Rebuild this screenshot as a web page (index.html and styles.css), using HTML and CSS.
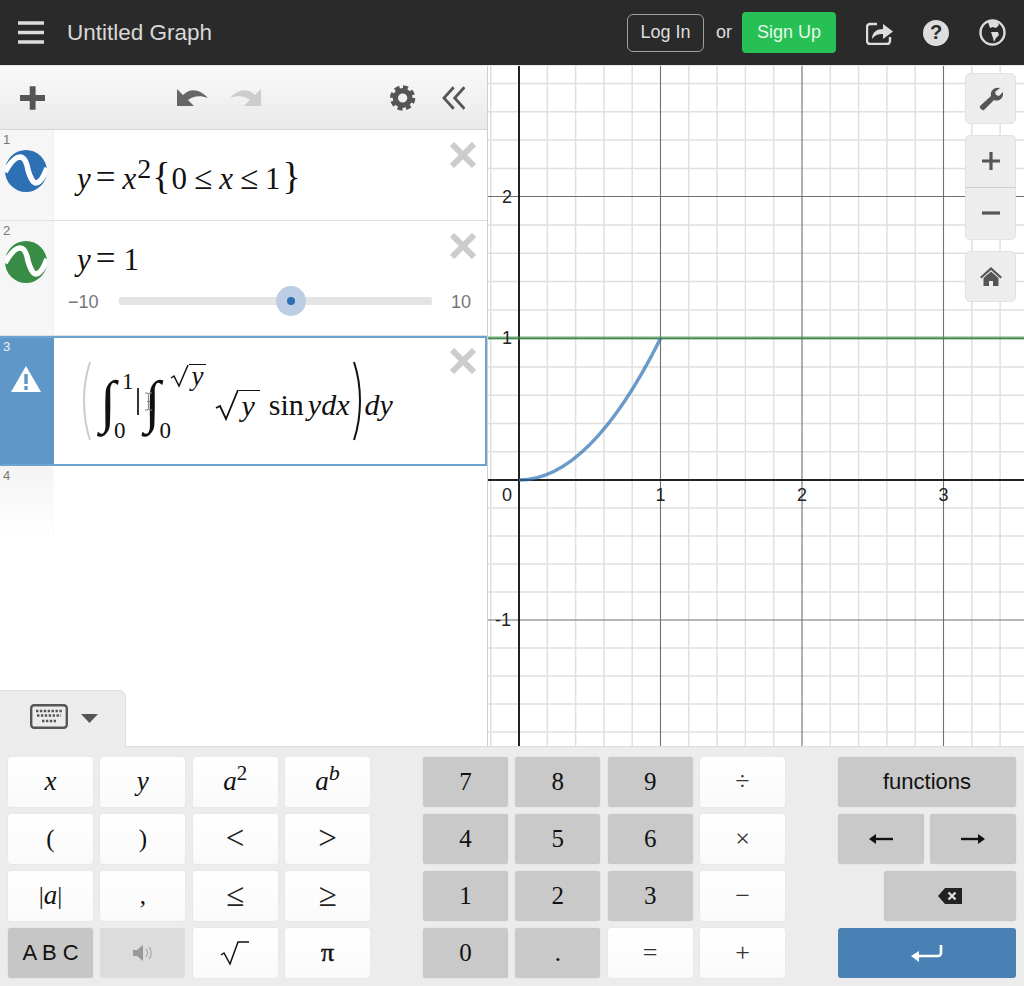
FILE: index.html
```html
<!DOCTYPE html>
<html lang="en">
<head>
<meta charset="utf-8">
<title>Untitled Graph</title>
<link rel="stylesheet" href="styles.css">
</head>
<body>
<div class="app">
  <header class="topbar">
    <svg class="burger" width="26" height="23" viewBox="0 0 26 23"><path d="M0 2h26M0 11.500h26M0 21h26" stroke="#ddd" stroke-width="3.600"/></svg>
    <span class="title">Untitled Graph</span>
    <div class="account">
      <span class="login">Log In</span>
      <span class="or">or</span>
      <span class="signup">Sign Up</span>
    </div>
    <div class="top-icons">
      <svg width="27" height="24" viewBox="0 0 27 24"><path d="M11 3H4a3 3 0 0 0-3 3v14a3 3 0 0 0 3 3h17a3 3 0 0 0 3-3v-4" fill="none" stroke="#ddd" stroke-width="2.400"/><path d="M6 18c0-7 5-10 11-10V3l10 7.500L17 18v-5c-5 0-8 1-11 5z" fill="#ddd"/></svg>
      <span class="help">?</span>
      <svg width="27" height="27" viewBox="0 0 27 27"><circle cx="13.500" cy="13.500" r="12" fill="none" stroke="#ddd" stroke-width="2.400"/><path d="M9 3l8-2 3 5-3 3-3-1-3 1zM12 13h7l1 3-3 3-2 4-1-4z" fill="#ddd"/></svg>
    </div>
  </header>

  <main class="workspace">
    <section class="panel">
      <div class="toolbar">
        <svg class="tb-plus" width="26" height="24" viewBox="0 0 26 24"><path d="M13 0v24M0 12h26" stroke="#555" stroke-width="6"/></svg>
        <div class="history">
          <svg width="31" height="18" viewBox="0 0 31 18"><path d="M0 0v17h17l-6-6c5-4 12-5 20-2C25 2 14-3 6 6z" fill="#666"/></svg>
          <svg width="31" height="18" viewBox="0 0 31 18"><path d="M31 0v17H14l6-6C15 7 8 6 0 9 6 2 17-3 25 6z" fill="#ccc"/></svg>
        </div>
        <svg class="gear" width="26" height="26" viewBox="0 0 26 26"><circle cx="13" cy="13" r="7.500" fill="none" stroke="#555" stroke-width="5.500"/><circle cx="13" cy="13" r="11" fill="none" stroke="#555" stroke-width="4" stroke-dasharray="5.100 3.540"/></svg>
        <svg class="collapse" width="24" height="24" viewBox="0 0 24 24"><path d="M12 1L2 12l10 11M23 1L13 12l10 11" fill="none" stroke="#555" stroke-width="2.800"/></svg>
      </div>

      <div class="row row-1">
        <div class="gutter"><span class="num">1</span>
          <svg class="wave" width="42" height="42" viewBox="0 0 42 42"><circle cx="21" cy="21" r="21" fill="#2d70b3"/><path d="M0 22C5 13 10 7 15 7c5 0 7 7 8 13 2 7 5 13 8 13 4 0 8-7 11-15" fill="none" stroke="#fff" stroke-width="5.500"/></svg>
        </div>
        <div class="cell">
          <div class="math"><i>y</i><span class="eq">=</span><i>x</i><sup>2</sup><span class="brace">{</span><span>0</span><span class="rel">≤</span><i>x</i><span class="rel">≤</span><span>1</span><span class="brace end">}</span></div>
          <svg class="close" width="26" height="26" viewBox="0 0 26 26"><path d="M2 2l22 22M24 2L2 24" stroke="#ccc" stroke-width="6"/></svg>
        </div>
      </div>

      <div class="row row-2">
        <div class="gutter"><span class="num">2</span>
          <svg class="wave" width="42" height="42" viewBox="0 0 42 42"><circle cx="21" cy="21" r="21" fill="#388c46"/><path d="M0 22C5 13 10 7 15 7c5 0 7 7 8 13 2 7 5 13 8 13 4 0 8-7 11-15" fill="none" stroke="#fff" stroke-width="5.500"/></svg>
        </div>
        <div class="cell">
          <div class="math"><i>y</i><span class="eq">=</span><span class="one">1</span></div>
          <svg class="close" width="26" height="26" viewBox="0 0 26 26"><path d="M2 2l22 22M24 2L2 24" stroke="#ccc" stroke-width="6"/></svg>
          <div class="slider">
            <span class="bound">−10</span>
            <div class="track"><span class="handle"><span class="dot"></span></span></div>
            <span class="bound">10</span>
          </div>
        </div>
      </div>

      <div class="row row-3">
        <div class="gutter selected"><span class="num">3</span>
          <svg class="warn" width="32" height="28" viewBox="0 0 32 28"><path d="M16 1l15 26H1z" fill="#fff"/><path d="M16 9v10M16 21v4" stroke="#5b97c9" stroke-width="3.400"/></svg>
        </div>
        <div class="cell">
          <div class="math big">
            <svg class="paren" width="10" height="80" viewBox="0 0 10 80"><path d="M8 1C0 25 0 55 8 79" fill="none" stroke="#ccc" stroke-width="2"/></svg>
            <span class="integral">∫</span>
            <span class="limits"><span>1</span><span class="low">0</span></span>
            <span class="caret"></span>
            <span class="integral second">∫</span>
            <span class="limits wide">
              <span class="root small"><svg width="19" height="24" viewBox="0 0 19 24"><path d="M1 14l3-2 5 10L18 1" fill="none" stroke="#111" stroke-width="1.500"/></svg><i>y</i></span>
              <span class="low">0</span>
            </span>
            <span class="root mid"><svg width="24" height="32" viewBox="0 0 24 32"><path d="M1 19l4-2 6 13L23 1" fill="none" stroke="#111" stroke-width="1.800"/></svg><i>y</i></span>
            <span class="sin mid">sin</span>
            <i class="var mid">ydx</i>
            <svg class="paren" width="10" height="80" viewBox="0 0 10 80"><path d="M2 1c8 24 8 54 0 78" fill="none" stroke="#111" stroke-width="2"/></svg>
            <i class="mid dy">dy</i>
          </div>
          <svg class="ibeam" width="9" height="19" viewBox="0 0 9 19"><path d="M1 1h2l1.500 1L6 1h2M1 18h2l1.500-1L6 18h2M4.500 2v15M3 9.500h3" fill="none" stroke="#888" stroke-width="1.100"/></svg>
          <svg class="close" width="26" height="26" viewBox="0 0 26 26"><path d="M2 2l22 22M24 2L2 24" stroke="#ccc" stroke-width="6"/></svg>
        </div>
      </div>

      <div class="row row-4">
        <div class="gutter fade"><span class="num">4</span></div>
      </div>
    </section>

    <section class="graph">
      <svg class="plane" width="536" height="680" viewBox="0 0 536 680">
        <path d="M2.700 0v680M59.300 0v680M87.600 0v680M115.900 0v680M144.200 0v680M200.800 0v680M229.100 0v680M257.400 0v680M285.700 0v680M342.300 0v680M370.600 0v680M398.900 0v680M427.200 0v680M483.800 0v680M512.100 0v680M0 17.500h536M0 45.800h536M0 74.100h536M0 102.400h536M0 159h536M0 187.300h536M0 215.600h536M0 243.900h536M0 301h536M0 329.200h536M0 357.500h536M0 385.700h536M0 442h536M0 470h536M0 498h536M0 526h536M0 582h536M0 610h536M0 638h536M0 666h536" stroke="#e0e0e0" stroke-width="1.500" fill="none"/>
        <path d="M172.500 0v680M314 0v680M455.500 0v680M0 130.500h536M0 272.500h536M0 554h536" stroke="#707070" stroke-width="1.100"/>
        <path d="M31 0v680M0 414h536" stroke="#222" stroke-width="2"/>
        <path d="M0 272h536" stroke="#388c46" stroke-width="3" opacity=".7"/>
        <path d="M31 414Q101.750 414 172.500 272.500" fill="none" stroke="#2d70b3" stroke-width="3.500" opacity=".7"/>
        <g class="labels">
          <text x="19" y="137">2</text>
          <text x="19" y="278">1</text>
          <text x="19" y="435">0</text>
          <text x="172.500" y="435">1</text>
          <text x="314" y="435">2</text>
          <text x="455.500" y="435">3</text>
          <text x="15" y="560">-1</text>
        </g>
      </svg>
      <div class="controls">
        <div class="ctl"><svg width="24" height="24" viewBox="0 0 24 24"><path d="M1 19L12 9c-1-5 3-9 9-8l-5 4 1 3 3 1 4-4c1 6-4 10-9 8L5 23c-2 1-5-2-4-4z" fill="#555"/></svg></div>
        <div class="ctl-group">
          <div class="ctl half"><svg width="18" height="18" viewBox="0 0 18 18"><path d="M9 0v18M0 9h18" stroke="#555" stroke-width="3.200"/></svg></div>
          <div class="ctl half"><svg width="18" height="4" viewBox="0 0 18 4"><path d="M0 2h18" stroke="#555" stroke-width="3.200"/></svg></div>
        </div>
        <div class="ctl"><svg width="22" height="19" viewBox="0 0 22 19"><path d="M11 0l11 10-1.500 1.500L11 3 1.500 11.500 0 10zM3.500 11L11 4.500 18.500 11v8H13v-5H9v5H3.500z" fill="#555"/></svg></div>
      </div>
    </section>
  </main>

  <footer class="keyboard">
    <div class="kb-tab">
      <svg width="38" height="25" viewBox="0 0 38 25"><rect x="1.200" y="1.200" width="35.600" height="22.600" rx="3" fill="none" stroke="#555" stroke-width="2.400"/><path d="M6 7h26M7 11.500h24M12 17h14" stroke="#555" stroke-width="2.500" stroke-dasharray="2.400 1.500"/></svg>
      <svg class="kb-arrow" width="17" height="9" viewBox="0 0 17 9"><path d="M0 0h17L8.500 9z" fill="#555"/></svg>
    </div>
    <div class="pad">
      <button class="key"><i>x</i></button>
      <button class="key"><i>y</i></button>
      <button class="key"><i>a</i><sup>2</sup></button>
      <button class="key"><i>a</i><sup><i>b</i></sup></button>
      <button class="key">(</button>
      <button class="key">)</button>
      <button class="key rel-key">&lt;</button>
      <button class="key rel-key">&gt;</button>
      <button class="key">|<i>a</i>|</button>
      <button class="key">,</button>
      <button class="key rel-key">≤</button>
      <button class="key rel-key">≥</button>
      <button class="key dark abc">A B C</button>
      <button class="key muted"><svg width="20" height="16" viewBox="0 0 20 16"><path d="M0 5h4l6-5v16l-6-5H0z" fill="#999"/><path d="M13 4c2 2 2 6 0 8M16 2c3 3 3 9 0 12" fill="none" stroke="#aaa" stroke-width="1.200"/></svg></button>
      <button class="key"><svg width="30" height="26" viewBox="0 0 30 26"><path d="M1 15l3-2 6 11L18 2h11" fill="none" stroke="#111" stroke-width="1.500"/></svg></button>
      <button class="key pi">π</button>
    </div>
    <div class="pad">
      <button class="key dark">7</button>
      <button class="key dark">8</button>
      <button class="key dark">9</button>
      <button class="key op">÷</button>
      <button class="key dark">4</button>
      <button class="key dark">5</button>
      <button class="key dark">6</button>
      <button class="key op">×</button>
      <button class="key dark">1</button>
      <button class="key dark">2</button>
      <button class="key dark">3</button>
      <button class="key op">−</button>
      <button class="key dark">0</button>
      <button class="key dark">.</button>
      <button class="key op">=</button>
      <button class="key op">+</button>
    </div>
    <div class="pad pad-right">
      <button class="key dark fn span-4">functions</button>
      <button class="key dark span-2"><svg width="24" height="10" viewBox="0 0 24 10"><path d="M6 5h18" stroke="#111" stroke-width="2.400"/><path d="M0 5l7-5v10z" fill="#111"/></svg></button>
      <button class="key dark span-2"><svg width="24" height="10" viewBox="0 0 24 10"><path d="M0 5h18" stroke="#111" stroke-width="2.400"/><path d="M24 5l-7-5v10z" fill="#111"/></svg></button>
      <button class="key dark span-3 start-2"><svg width="24" height="16" viewBox="0 0 24 16"><path d="M7 0h17v16H7L0 8z" fill="#222"/><path d="M10.500 4.500l7 7M17.500 4.500l-7 7" stroke="#ddd" stroke-width="2.400"/></svg></button>
      <button class="key enter span-4"><svg width="32" height="18" viewBox="0 0 32 18"><path d="M30 1v8a3 3 0 0 1-3 3H6" fill="none" stroke="#fff" stroke-width="2.600"/><path d="M0 12l8-5v11z" fill="#fff"/></svg></button>
    </div>
  </footer>
</div>
</body>
</html>
```
FILE: styles.css
```css
* { box-sizing: border-box; }
html, body { margin: 0; padding: 0; }
body { font-family: "Liberation Sans", Arial, sans-serif; background: #fff; }

.app { width: 1024px; height: 986px; display: flex; flex-direction: column; overflow: hidden; }

/* top bar */
.topbar { height: 66px; flex: none; background: #2a2a2a; border-bottom: 1px solid #e8e8e8; display: flex; align-items: center; padding: 0 18px; color: #ddd; }
.title { margin-left: 23px; font-size: 22.500px; color: #d8d8d8; }
.account { margin-left: auto; display: flex; align-items: center; }
.login { width: 77px; height: 38px; border: 1.500px solid #a0a0a0; border-radius: 6px; display: flex; align-items: center; justify-content: center; font-size: 18px; }
.or { margin: 0 10px 0 12px; font-size: 18px; }
.signup { width: 94px; height: 41px; background: #27c055; border-radius: 4px; display: flex; align-items: center; justify-content: center; font-size: 18px; color: #e8f8ec; }
.top-icons { margin-left: 30px; display: flex; align-items: center; gap: 30px; }
.help { width: 26px; height: 26px; border-radius: 50%; background: #ddd; color: #2a2a2a; font-weight: 700; font-size: 20px; display: flex; align-items: center; justify-content: center; }

/* main */
.workspace { flex: 1; min-height: 0; display: flex; }
.panel { width: 488px; flex: none; border-right: 1px solid #cfcfcf; display: flex; flex-direction: column; background: #fff; }

.toolbar { height: 64px; flex: none; display: flex; align-items: center; padding: 0 22px 0 20px; background: linear-gradient(#fafafa, #e9e9e9); border-bottom: 1px solid #d4d4d4; }
.history { margin-left: 132px; display: flex; gap: 22px; }
.gear { margin-left: 129px; }
.collapse { margin-left: 26px; }

.row { display: flex; border-bottom: 1px solid #e0e0e0; }
.row-1 { height: 91px; }
.row-2 { height: 115px; }
.row-3 { height: 130px; border: 2px solid #6fa3cf; border-left: 0; }
.row-4 { height: 70px; border: 0; }

.gutter { width: 54px; flex: none; background: #f6f6f6; border-right: 1px solid #eee; padding: 3px 0 0 3px; }
.num { display: block; font-size: 13px; line-height: 14px; color: #777; }
.wave { display: block; margin: 3px 0 0 2px; }
.selected { background: #5f98c8; border: 0; padding-top: 2px; }
.selected .num { color: #eef4fa; }
.warn { display: block; margin: 11px 0 0 7px; }
.fade { background: linear-gradient(#f4f4f4, #fff); border-right-color: #fafafa; }

.cell { flex: 1; position: relative; padding-left: 23px; }
.close { position: absolute; right: 11px; top: 12px; }
.row-3 .close { right: 9px; top: 10px; }
.ibeam { position: absolute; left: 90px; top: 54px; }

.math { font-family: "Liberation Serif", "Times New Roman", serif; font-size: 31px; color: #111; display: flex; align-items: baseline; line-height: 36px; padding-top: 28px; white-space: nowrap; }
.math sup { font-size: 28px; line-height: 0; position: relative; top: -11px; vertical-align: baseline; margin-left: 1px; }
.eq { margin: 0 7px 0 5px; font-size: 35px; }
.one { margin-left: 1px; }
.rel { margin: 0 7px; font-size: 33px; }
.brace { font-size: 38px; line-height: 36px; margin: 0 1px 0 1px; font-weight: 400; }
.brace.end { margin: 0 0 0 2px; }
.row-2 .math { padding-top: 20px; }

.slider { display: flex; align-items: center; margin: 12px 0 0 -9px; color: #777; font-size: 18px; }
.bound { width: 32px; position: relative; top: 2px; }
.bound:last-child { margin-left: 19px; }
.track { width: 313px; height: 8px; margin-left: 19px; background: #e4e4e4; border-radius: 2px; position: relative; }
.handle { position: absolute; left: 157px; top: -11px; width: 30px; height: 30px; border-radius: 50%; background: #bccde4; display: flex; align-items: center; justify-content: center; }
.dot { width: 8px; height: 8px; border-radius: 50%; background: #2d70b3; }

.math.big { padding: 22px 0 0 5px; font-size: 30px; align-items: center; height: 104px; }
.paren { flex: none; }
.integral { font-size: 58px; line-height: 76px; margin-left: 8px; width: 21px; margin-top: 2px; }
.integral.second { margin-left: 0; }
.limits { display: flex; flex-direction: column; justify-content: space-between; height: 84px; padding-top: 11px; font-size: 23px; line-height: 24px; margin-left: 1px; width: 12px; }
.limits.wide { width: 45px; padding-top: 3px; margin-left: 4px; }
.low { margin-left: -8px; }
.wide .low { margin-left: -10px; }
.caret { width: 1.500px; height: 27px; background: #333; margin: 0 6px 0 3px; }
.root { display: inline-flex; align-items: flex-end; }
.root i { border-top: 1.800px solid #111; line-height: 30px; padding: 0 5px 0 3px; }
.root.small { height: 26px; }
.root.small i { line-height: 23px; font-size: 27px; padding: 0 3px 0 3px; border-top-width: 1.500px; }
.mid { margin-top: 8px; }
.sin { margin-left: 9px; }
.var { margin-left: 4px; margin-right: 3px; }
.dy { margin-left: 2px; }

/* graph */
.graph { flex: 1; position: relative; overflow: hidden; background: #fff; }
.plane { display: block; }
.labels text { font-family: "Liberation Sans", Arial, sans-serif; font-size: 18px; fill: #222; text-anchor: middle; }
.controls { position: absolute; top: 7px; right: 8px; width: 51px; display: flex; flex-direction: column; gap: 11px; }
.ctl { height: 51px; background: #ededed; border: 1px solid #e2e2e2; border-radius: 5px; display: flex; align-items: center; justify-content: center; }
.ctl-group { display: flex; flex-direction: column; }
.ctl.half { height: 52.500px; }
.ctl.half:first-child { border-radius: 5px 5px 0 0; border-bottom-color: #d0d0d0; }
.ctl.half:last-child { border-radius: 0 0 5px 5px; border-top: 0; }

/* keyboard */
.keyboard { height: 240px; flex: none; position: relative; background: #ececec; border-top: 1px solid #dcdcdc; display: flex; padding: 10px 8px 0; gap: 53px; }
.kb-tab { position: absolute; left: 0; bottom: 100%; width: 126px; height: 58px; margin-bottom: -1px; background: #ececec; border: 1px solid #dfdfdf; border-width: 1px 1px 0 0; border-radius: 0 7px 0 0; display: flex; align-items: center; gap: 13px; padding: 0 0 6px 30px; }
.kb-arrow { margin-top: 3px; }
.pad { width: 362px; display: grid; grid-template-columns: repeat(4, 1fr); grid-auto-rows: 49.500px; gap: 7.500px 7.300px; align-content: start; }
.pad-right { width: 178px; margin-left: 0; gap: 7.500px 6px; }
.key { margin: 0; padding: 0; border: 0; border-radius: 3px; background: linear-gradient(#fff, #fafafa); box-shadow: 0 0 1px #ccc; font-family: "Liberation Serif", "Times New Roman", serif; font-size: 25px; color: #111; display: flex; align-items: center; justify-content: center; }
.key i { font-size: 27px; }
.key sup { font-size: 21px; line-height: 0; position: relative; top: -9px; }
.key sup i { font-size: 22px; }
.rel-key { font-size: 33px; color: #222; }
.pi { font-size: 26px; -webkit-text-stroke: 0.500px #111; }
.dark { background: #c9c9c9; box-shadow: 0 0 1px #bbb; }
.muted { background: #dcdcdc; box-shadow: none; }
.abc { font-family: "Liberation Sans", Arial, sans-serif; font-size: 22px; background: #c6c6c6; }
.op { color: #333; font-size: 26px; }
.fn { font-family: "Liberation Sans", Arial, sans-serif; font-size: 22px; }
.enter { background: #4a81b5; box-shadow: none; }
.span-2 { grid-column: span 2; }
.span-3 { grid-column: span 3; }
.span-4 { grid-column: span 4; }
.start-2 { grid-column: 2 / span 3; }
```
